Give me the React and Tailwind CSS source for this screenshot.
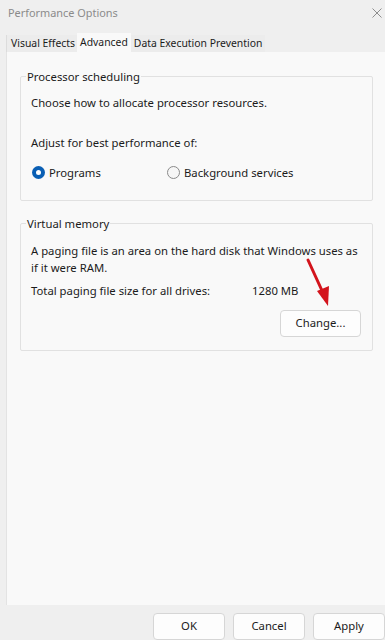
import React from "react";

function Radio({ checked }) {
  return checked ? (
    <span className="flex h-[13px] w-[13px] items-center justify-center rounded-full bg-[#0a5fb4]">
      <span className="h-[5px] w-[5px] rounded-full bg-white" />
    </span>
  ) : (
    <span className="h-[13px] w-[13px] rounded-full border border-[#8a8a8a] bg-[#f6f6f6]" />
  );
}

function Group({ title, children, className = "" }) {
  return (
    <fieldset className={`border border-[#e1e1e1] rounded-[2px] ${className}`}>
      <legend className="ml-[5px] px-[1px] leading-[17px] text-[#1b1b1b]">{title}</legend>
      {children}
    </fieldset>
  );
}

function Btn({ children, className = "" }) {
  return (
    <button className={`h-[27px] w-[72px] rounded-[4px] border border-[#d6d6d6] bg-[#fdfdfd] text-[11.3px] text-[#1b1b1b] ${className}`}>
      {children}
    </button>
  );
}

export default function App() {
  return (
    <div
      className="relative flex h-[640px] w-[385px] flex-col overflow-hidden bg-[#efefef] text-[11.3px] text-[#1b1b1b]"
      style={{ fontFamily: '"Noto Sans", "Open Sans", sans-serif' }}
    >
      {/* Title bar */}
      <div className="flex h-[26px] items-center justify-between pl-[8px] pr-[2px]">
        <span className="text-[10.9px] text-[#8b8b8b]">Performance Options</span>
        <svg width="12" height="12" viewBox="0 0 12 12">
          <path d="M1.5 1.5 L10.5 10.5 M10.5 1.5 L1.5 10.5" stroke="#8d8d8d" strokeWidth="1" fill="none" />
        </svg>
      </div>

      {/* Tabs */}
      <div className="mt-[7px] flex h-[19px] items-end pl-[6px] text-[10.4px]">
        <div className="flex h-[17px] items-center border-l border-[#dcdcdc] bg-[#ececec] pl-[4px] pr-[2px]">Visual Effects</div>
        <div className="flex h-[19px] items-center bg-[#f9f9f9] px-[3px]">Advanced</div>
        <div className="flex h-[17px] items-center bg-[#ececec] px-[3px]">Data Execution Prevention</div>
      </div>

      {/* Panel */}
      <div className="ml-[6px] flex h-[553px] flex-col border-l border-[#e3e3e3] bg-[#f9f9f9] pl-[13px] pr-[12px] pt-[16px]">
        <Group title="Processor scheduling" className="h-[133px]">
          <div className="flex flex-col px-[10px] pt-[9px]">
            <div className="leading-[17px]">Choose how to allocate processor resources.</div>
            <div className="mt-[23px] leading-[17px]">Adjust for best performance of:</div>
            <div className="mt-[13px] flex items-center leading-[17px]">
              <div className="flex w-[136px] items-center gap-[4px] pl-[1px]">
                <Radio checked />
                <span>Programs</span>
              </div>
              <div className="flex items-center gap-[4px]">
                <Radio />
                <span>Background services</span>
              </div>
            </div>
          </div>
        </Group>

        <Group title="Virtual memory" className="mt-[14px] h-[136px]">
          <div className="flex flex-col px-[10px] pt-[10px]">
            <div className="leading-[17px]">
              A paging file is an area on the hard disk that Windows uses as if it were RAM.
            </div>
            <div className="mt-[6px] flex leading-[17px]">
              <span className="w-[221px]">Total paging file size for all drives:</span>
              <span>1280 MB</span>
            </div>
            <div className="mt-[11px] flex justify-end pr-[1px]">
              <Btn className="w-[81px]">Change...</Btn>
            </div>
          </div>
        </Group>
      </div>

      {/* Bottom buttons */}
      <div className="mt-[8px] flex justify-end gap-[8px]">
        <Btn>OK</Btn>
        <Btn>Cancel</Btn>
        <Btn>Apply</Btn>
      </div>

      {/* Red annotation arrow */}
      <svg className="pointer-events-none absolute left-[300px] top-[255px]" width="40" height="56" viewBox="0 0 40 56">
        <path d="M8 5 L24 40" stroke="#d3141c" strokeWidth="3" strokeLinecap="round" fill="none" />
        <path d="M17 36 L29 31 L28 51 Z" fill="#d3141c" />
      </svg>
    </div>
  );
}
